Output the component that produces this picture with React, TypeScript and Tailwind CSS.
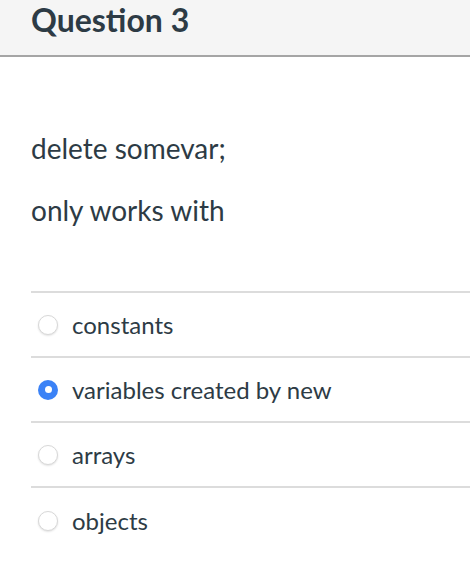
import React from "react";

const options = [
  { label: "constants", checked: false },
  { label: "variables created by new", checked: true },
  { label: "arrays", checked: false },
  { label: "objects", checked: false },
];

function Radio({ checked }: { checked: boolean }) {
  if (checked) {
    return (
      <span className="flex h-[20px] w-[20px] shrink-0 items-center justify-center rounded-full bg-[#3b82f6]">
        <span className="h-[7px] w-[7px] rounded-full bg-white" />
      </span>
    );
  }
  return (
    <span className="h-[20px] w-[20px] shrink-0 rounded-full border border-[#d8d8d8] bg-white shadow-[0_1px_2px_rgba(0,0,0,0.12)]" />
  );
}

export default function App() {
  return (
    <div className="h-[574px] w-[470px] overflow-hidden bg-white text-[#2d3b45] [font-family:Lato,'Liberation_Sans',sans-serif]">
      <div className="h-[57px] border-b-2 border-[#a5a5a5] bg-[#f5f5f5] pl-[31px]">
        <h2 className="text-[32px] font-bold leading-[40px]">Question 3</h2>
      </div>
      <div className="pl-[31px] pt-[76px]">
        <p className="text-[28px] leading-[30px]">delete somevar;</p>
        <p className="mt-[32px] text-[28px] leading-[30px]">only works with</p>
      </div>
      <div className="ml-[31px] mt-[66px] border-t-2 border-[#dcdcdc]">
        {options.map((o, i) => (
          <div
            key={o.label}
            className={`flex h-[65px] items-center gap-[14px] pl-[7px] ${i < options.length - 1 ? "border-b-2 border-[#dcdcdc]" : ""}`}
          >
            <Radio checked={o.checked} />
            <span className="text-[24px] leading-[26px]">{o.label}</span>
          </div>
        ))}
      </div>
    </div>
  );
}
